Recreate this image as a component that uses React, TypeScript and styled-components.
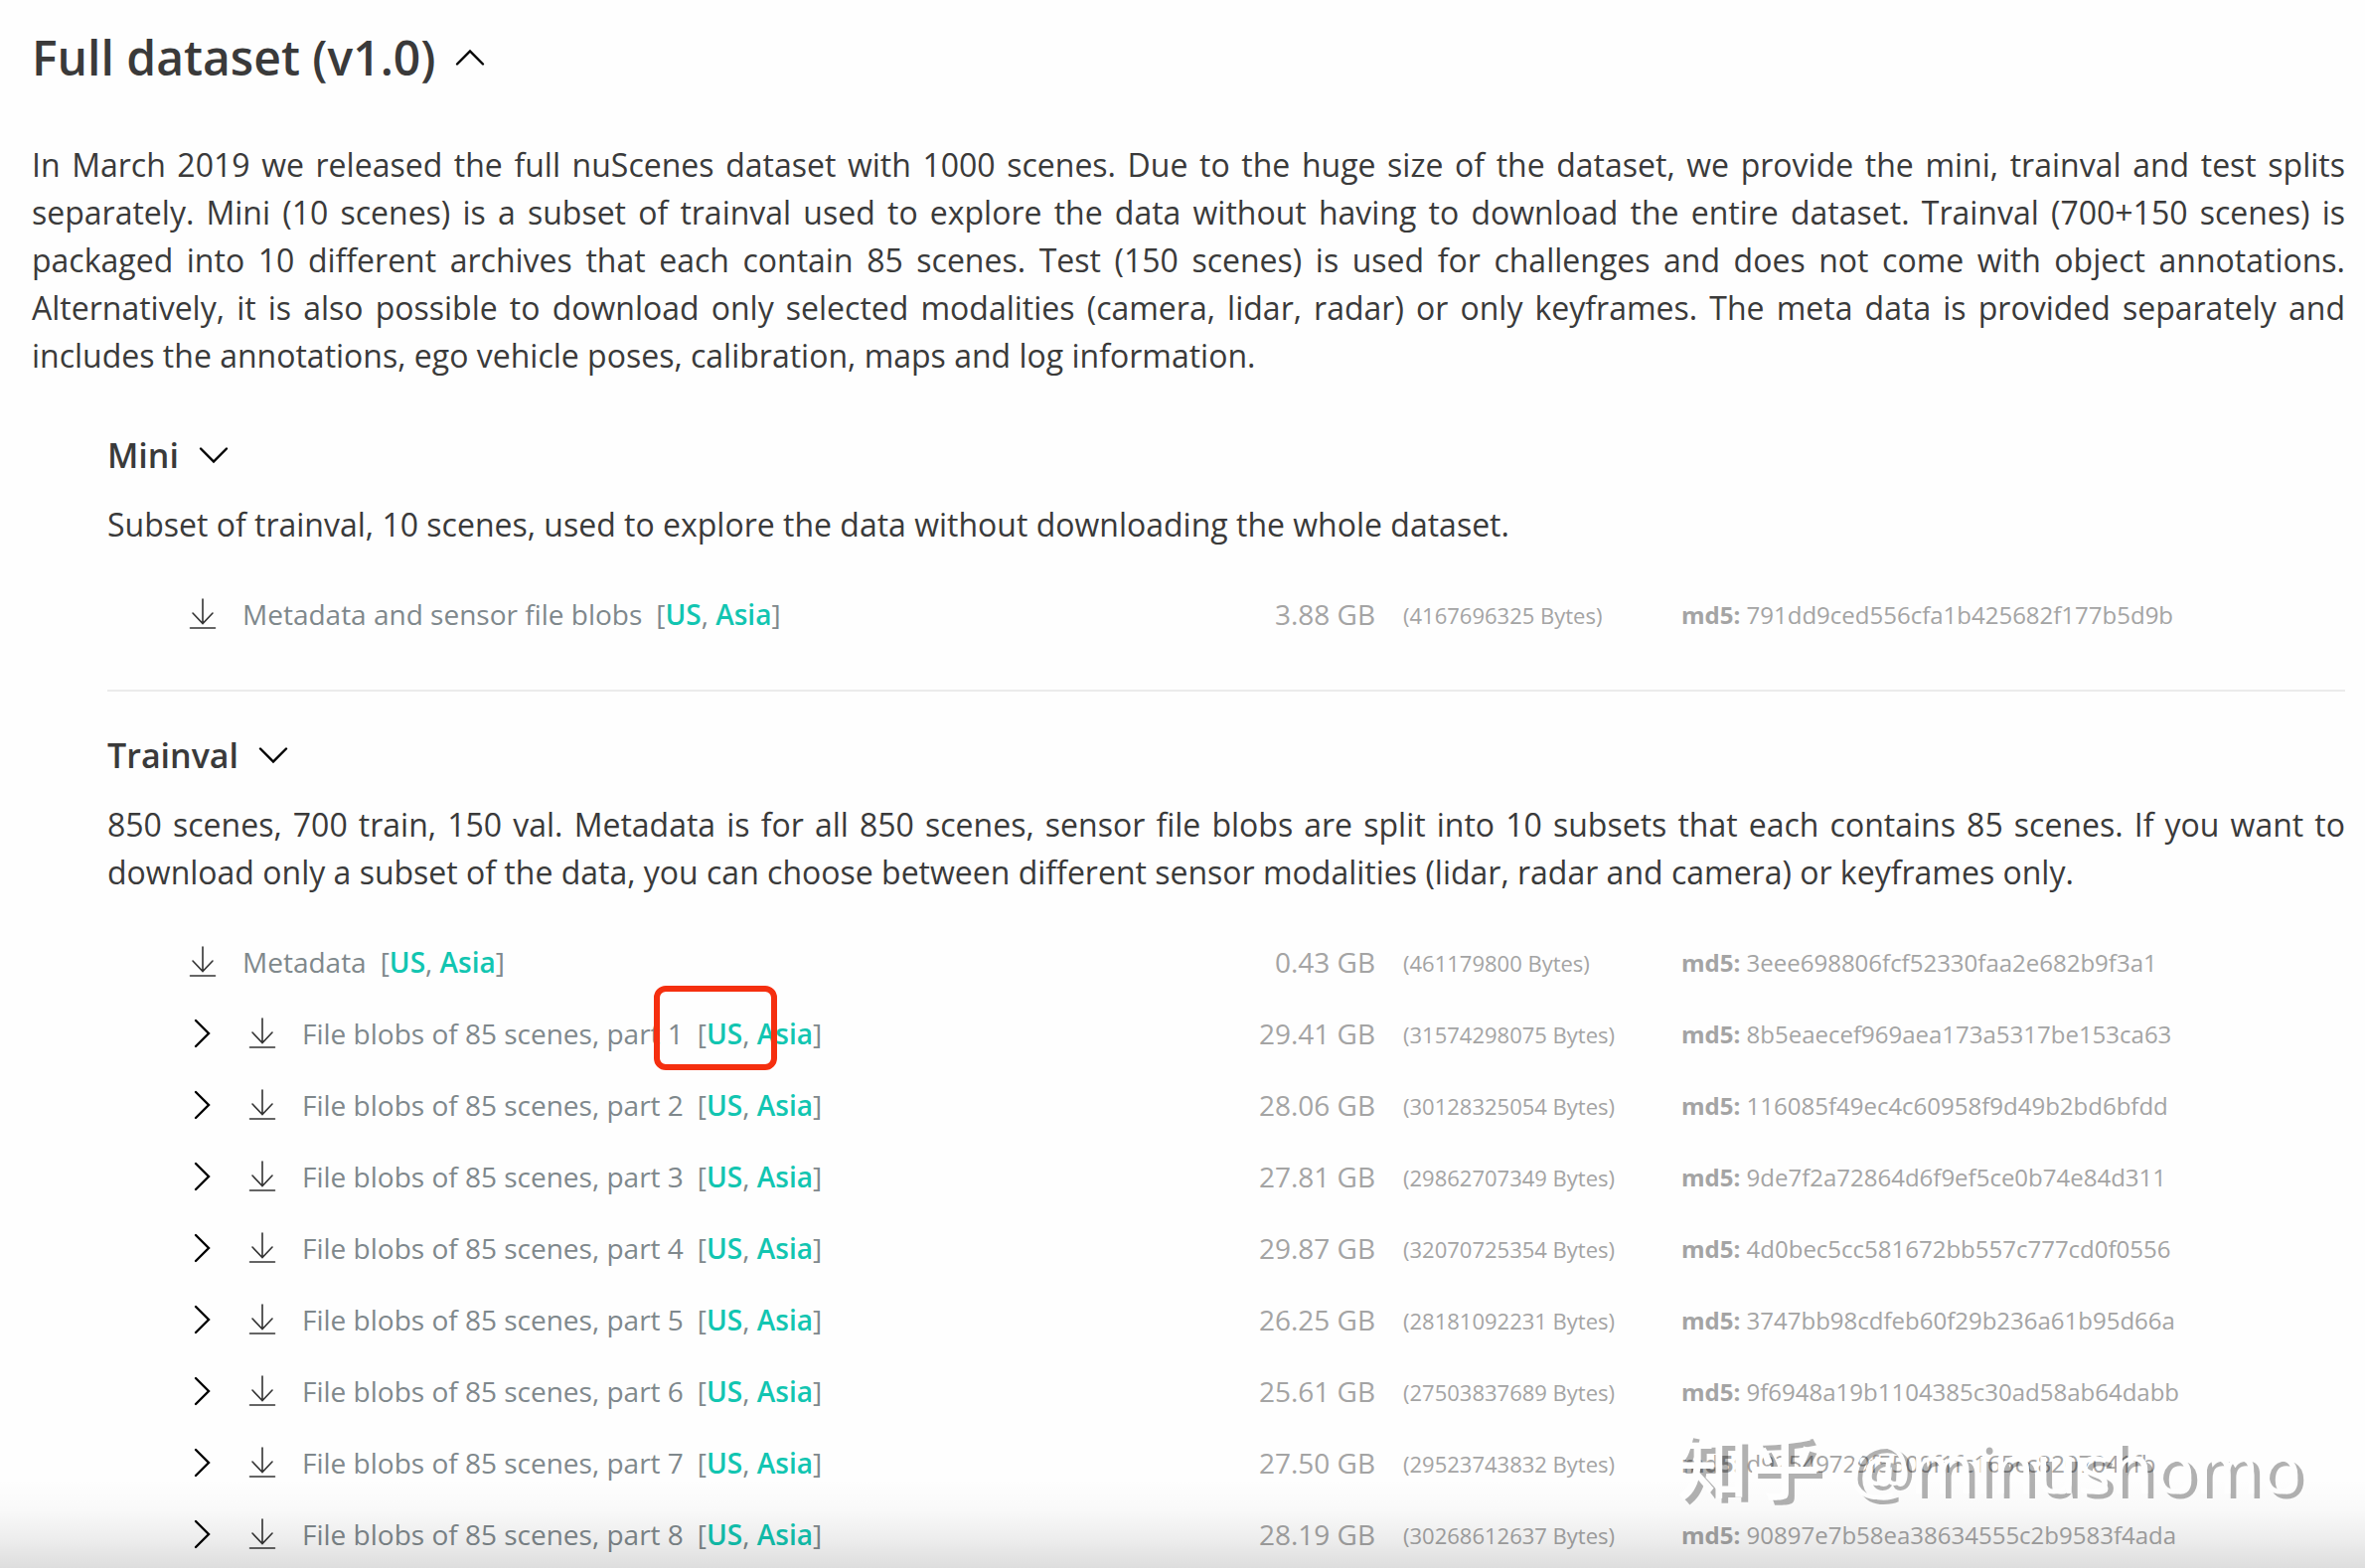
import React from "react";
import styled, { createGlobalStyle } from "styled-components";

const GlobalStyle = createGlobalStyle`
  *, *::before, *::after { box-sizing: border-box; }
  body {
    margin: 0;
    background: #fefefe;
    color: #3a3a3a;
    font-family: "Open Sans", "Noto Sans", "Noto Sans CJK SC", sans-serif;
    font-size: 32px;
    line-height: 48px;
  }
`;

const Page = styled.main`
  position: relative;
  height: 100vh;
  overflow: hidden;
  padding: 22px 20px 0 32px;
`;

const TitleRow = styled.div`
  display: flex;
  align-items: center;
  gap: 20px;
  margin-bottom: 48px;
`;

const Title = styled.h1`
  margin: 0;
  font-size: 48px;
  line-height: 72px;
  font-weight: 600;
`;

const Paragraph = styled.p`
  margin: 0;
  text-align: justify;
`;

const Section = styled.section`
  margin-left: 76px;
  padding: 40px 0;

  & + & {
    border-top: 2px solid #ebebeb;
  }
`;

const Sections = styled.div`
  margin-top: 12px;
`;

const SectionHead = styled.div`
  display: flex;
  align-items: center;
  gap: 20px;
  margin-bottom: 22px;
`;

const SectionTitle = styled.h2`
  margin: 0;
  font-size: 34px;
  line-height: 48px;
  font-weight: 600;
`;

const IconButton = styled.button`
  display: flex;
  padding: 0;
  border: 0;
  background: none;
  color: #000;
  cursor: pointer;
`;

const Files = styled.table`
  width: calc(100% - 82px);
  margin: 30px 0 0 82px;
  border-collapse: collapse;
  table-layout: fixed;
`;

const Cell = styled.td`
  height: 72px;
  padding: 0;
  white-space: nowrap;
  color: #a4a4a4;
`;

const NameCell = styled(Cell)`
  color: #7f888c;
  font-size: 28px;
`;

const SizeCell = styled(Cell)`
  width: 200px;
  font-size: 28px;
  text-align: right;
`;

const BytesCell = styled(Cell)`
  width: 308px;
  padding: 2px 0 0 28px;
  font-size: 22px;
`;

const HashCell = styled(Cell)`
  width: 668px;
  padding-top: 2px;
  font-size: 24px;
`;

const NameLine = styled.div`
  position: relative;
  display: flex;
  align-items: center;
`;

const ExpandButton = styled(IconButton)`
  width: 60px;
`;

const DownloadButton = styled(IconButton)`
  width: 54px;
`;

const Mirrors = styled.span`
  margin-left: 14px;
`;

const MirrorLink = styled.a`
  color: #12c5b1;
  font-weight: 600;
  text-decoration: none;
`;

const Marker = styled.span`
  position: absolute;
  left: 468px;
  top: -24px;
  width: 124px;
  height: 85px;
  border: 6px solid #f52f0f;
  border-radius: 12px;
  pointer-events: none;
`;

const Shade = styled.div`
  position: absolute;
  left: 0;
  right: 0;
  bottom: 0;
  height: 90px;
  background: linear-gradient(
    rgba(0, 0, 0, 0),
    rgba(0, 0, 0, 0.02) 35%,
    rgba(0, 0, 0, 0.07) 70%,
    rgba(0, 0, 0, 0.13)
  );
  pointer-events: none;
`;

const Watermark = styled.div`
  position: absolute;
  right: 64px;
  bottom: 54px;
  display: flex;
  align-items: baseline;
  gap: 28px;
  font-size: 70px;
  line-height: 96px;
  color: #fefefe;
  text-shadow: 6px 5px 0 rgba(0, 0, 0, 0.3);
  white-space: nowrap;
  pointer-events: none;
`;

const WatermarkBrand = styled.span`
  font-family: "Noto Sans CJK SC", sans-serif;
  font-size: 72px;
  font-weight: 500;
`;

function Chevron({ up = false }: { up?: boolean }) {
  return (
    <svg width="30" height="18" viewBox="0 0 30 18" fill="none" stroke="currentColor" strokeWidth="2.4" strokeLinecap="round">
      <path d={up ? "M2 15.5 15 2.5l13 13" : "M2 2.5l13 13 13-13"} />
    </svg>
  );
}

function ExpandIcon() {
  return (
    <svg width="28" height="30" viewBox="0 0 28 30" fill="none" stroke="currentColor" strokeWidth="2.4" strokeLinecap="round">
      <path d="M7 2l13 13L7 28" />
    </svg>
  );
}

function DownloadIcon() {
  return (
    <svg width="28" height="32" viewBox="0 0 28 32" fill="none" stroke="#333" strokeWidth="1.6" strokeLinecap="round">
      <path d="M14 1v24M4 15l10 10.500 10-10.500M1.500 30h25" />
    </svg>
  );
}

interface FileEntry {
  name: string;
  size: string;
  bytes: string;
  md5: string;
  expandable?: boolean;
  marked?: boolean;
}

const miniFiles: FileEntry[] = [
  { name: "Metadata and sensor file blobs", size: "3.88", bytes: "4167696325", md5: "791dd9ced556cfa1b425682f177b5d9b" },
];

const parts: [string, string, string][] = [
  ["29.41", "31574298075", "8b5eaecef969aea173a5317be153ca63"],
  ["28.06", "30128325054", "116085f49ec4c60958f9d49b2bd6bfdd"],
  ["27.81", "29862707349", "9de7f2a72864d6f9ef5ce0b74e84d311"],
  ["29.87", "32070725354", "4d0bec5cc581672bb557c777cd0f0556"],
  ["26.25", "28181092231", "3747bb98cdfeb60f29b236a61b95d66a"],
  ["25.61", "27503837689", "9f6948a19b1104385c30ad58ab64dabb"],
  ["27.50", "29523743832", "d92549729f5500f1fc165cc8207041fb"],
  ["28.19", "30268612637", "90897e7b58ea38634555c2b9583f4ada"],
];

const trainvalFiles: FileEntry[] = [
  { name: "Metadata", size: "0.43", bytes: "461179800", md5: "3eee698806fcf52330faa2e682b9f3a1" },
  ...parts.map(([size, bytes, md5], i) => ({
    name: `File blobs of 85 scenes, part ${i + 1}`,
    size,
    bytes,
    md5,
    expandable: true,
    marked: i === 0,
  })),
];

function FileTable({ files }: { files: FileEntry[] }) {
  return (
    <Files>
      <tbody>
        {files.map((f) => (
          <tr key={f.name}>
            <NameCell>
              <NameLine>
                {f.expandable && (
                  <ExpandButton aria-label={`Expand ${f.name}`}>
                    <ExpandIcon />
                  </ExpandButton>
                )}
                <DownloadButton aria-label={`Download ${f.name}`}>
                  <DownloadIcon />
                </DownloadButton>
                <span>{f.name}</span>
                <Mirrors>
                  [<MirrorLink href="#us">US</MirrorLink>, <MirrorLink href="#asia">Asia</MirrorLink>]
                </Mirrors>
                {f.marked && <Marker />}
              </NameLine>
            </NameCell>
            <SizeCell>{f.size} GB</SizeCell>
            <BytesCell>({f.bytes} Bytes)</BytesCell>
            <HashCell>
              <b>md5:</b> {f.md5}
            </HashCell>
          </tr>
        ))}
      </tbody>
    </Files>
  );
}

export default function App() {
  return (
    <>
      <GlobalStyle />
      <Page>
        <TitleRow>
          <Title>Full dataset (v1.0)</Title>
          <IconButton aria-label="Collapse full dataset">
            <Chevron up />
          </IconButton>
        </TitleRow>
        <Paragraph>
          In March 2019 we released the full nuScenes dataset with 1000 scenes. Due to the huge size of the dataset, we
          provide the mini, trainval and test splits separately. Mini (10 scenes) is a subset of trainval used to explore
          the data without having to download the entire dataset. Trainval (700+150 scenes) is packaged into 10 different
          archives that each contain 85 scenes. Test (150 scenes) is used for challenges and does not come with object
          annotations. Alternatively, it is also possible to download only selected modalities (camera, lidar, radar) or
          only keyframes. The meta data is provided separately and includes the annotations, ego vehicle poses,
          calibration, maps and log information.
        </Paragraph>
        <Sections>
          <Section>
            <SectionHead>
              <SectionTitle>Mini</SectionTitle>
              <IconButton aria-label="Toggle Mini">
                <Chevron />
              </IconButton>
            </SectionHead>
            <Paragraph>
              Subset of trainval, 10 scenes, used to explore the data without downloading the whole dataset.
            </Paragraph>
            <FileTable files={miniFiles} />
          </Section>
          <Section>
            <SectionHead>
              <SectionTitle>Trainval</SectionTitle>
              <IconButton aria-label="Toggle Trainval">
                <Chevron />
              </IconButton>
            </SectionHead>
            <Paragraph>
              850 scenes, 700 train, 150 val. Metadata is for all 850 scenes, sensor file blobs are split into 10 subsets
              that each contains 85 scenes. If you want to download only a subset of the data, you can choose between
              different sensor modalities (lidar, radar and camera) or keyframes only.
            </Paragraph>
            <FileTable files={trainvalFiles} />
          </Section>
        </Sections>
        <Shade />
        <Watermark>
          <WatermarkBrand>知乎</WatermarkBrand>
          <span>@minushomo</span>
        </Watermark>
      </Page>
    </>
  );
}
